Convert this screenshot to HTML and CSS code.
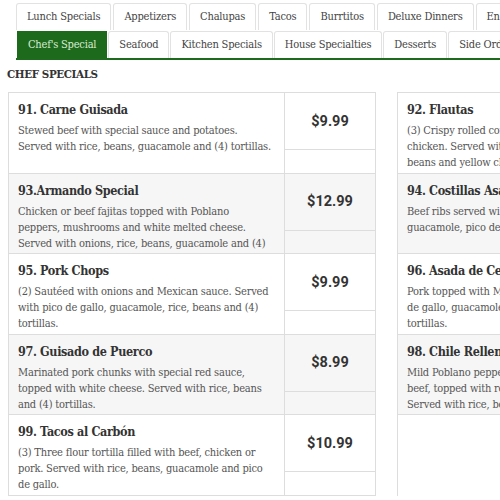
FILE: index.html
```html
<!DOCTYPE html>
<html lang="en">
<head>
<meta charset="utf-8">
<title>Chef Specials</title>
<link rel="stylesheet" href="styles.css">
</head>
<body>
<nav class="tabs">
  <ul class="tab-row">
    <li class="tab">Lunch Specials</li>
    <li class="tab">Appetizers</li>
    <li class="tab">Chalupas</li>
    <li class="tab">Tacos</li>
    <li class="tab">Burrtitos</li>
    <li class="tab">Deluxe Dinners</li>
    <li class="tab">Enchiladas</li>
  </ul>
  <ul class="tab-row tab-row-active">
    <li class="tab active">Chef's Special</li>
    <li class="tab">Seafood</li>
    <li class="tab">Kitchen Specials</li>
    <li class="tab">House Specialties</li>
    <li class="tab">Desserts</li>
    <li class="tab">Side Orders</li>
  </ul>
</nav>
<h2 class="section-title">CHEF SPECIALS</h2>
<div class="columns">
  <div class="menu">
    <div class="item">
      <div class="info"><h3 class="name">91. Carne Guisada</h3><p class="desc">Stewed beef with special sauce and potatoes. Served with rice, beans, guacamole and (4) tortillas.</p></div>
      <div class="price"><div class="amt">$9.99</div><div class="blank"></div></div>
    </div>
    <div class="item">
      <div class="info"><h3 class="name">93.Armando Special</h3><p class="desc">Chicken or beef fajitas topped with Poblano peppers, mushrooms and white melted cheese. Served with onions, rice, beans, guacamole and (4) tortillas.</p></div>
      <div class="price"><div class="amt">$12.99</div><div class="blank"></div></div>
    </div>
    <div class="item">
      <div class="info"><h3 class="name">95. Pork Chops</h3><p class="desc">(2) Sautéed with onions and Mexican sauce. Served with pico de gallo, guacamole, rice, beans and (4) tortillas.</p></div>
      <div class="price"><div class="amt">$9.99</div><div class="blank"></div></div>
    </div>
    <div class="item">
      <div class="info"><h3 class="name">97. Guisado de Puerco</h3><p class="desc">Marinated pork chunks with special red sauce, topped with white cheese. Served with rice, beans and (4) tortillas.</p></div>
      <div class="price"><div class="amt">$8.99</div><div class="blank"></div></div>
    </div>
    <div class="item">
      <div class="info"><h3 class="name">99. Tacos al Carbón</h3><p class="desc">(3) Three flour tortilla filled with beef, chicken or pork. Served with rice, beans, guacamole and pico de gallo.</p></div>
      <div class="price"><div class="amt">$10.99</div><div class="blank"></div></div>
    </div>
  </div>
  <div class="menu">
    <div class="item">
      <div class="info"><h3 class="name">92. Flautas</h3><p class="desc">(3) Crispy rolled corn tortillas filled with beef or chicken. Served with rice, guacamole, sour cream, beans and yellow cheese.</p></div>
      <div class="price"><div class="amt">$9.99</div><div class="blank"></div></div>
    </div>
    <div class="item">
      <div class="info"><h3 class="name">94. Costillas Asadas</h3><p class="desc">Beef ribs served with rice, refried beans, guacamole, pico de gallo and (4) tortillas.</p></div>
      <div class="price"><div class="amt">$11.99</div><div class="blank"></div></div>
    </div>
    <div class="item">
      <div class="info"><h3 class="name">96. Asada de Cerdo</h3><p class="desc">Pork topped with Mexican sauce. Served with pico de gallo, guacamole, rice, charro beans and (4) tortillas.</p></div>
      <div class="price"><div class="amt">$9.99</div><div class="blank"></div></div>
    </div>
    <div class="item">
      <div class="info"><h3 class="name">98. Chile Relleno</h3><p class="desc">Mild Poblano pepper stuffed with cheese or ground beef, topped with red Spanish sauce and cheese. Served with rice, beans and (4) tortillas.</p></div>
      <div class="price"><div class="amt">$9.99</div><div class="blank"></div></div>
    </div>
  </div>
</div>
</body>
</html>
```

FILE: styles.css
```css
html, body {
  margin: 0;
  padding: 0;
  background: #fff;
  overflow: hidden;
}
body {
  width: 500px;
  height: 500px;
  font-family: "DejaVu Serif", "Liberation Serif", serif;
  font-stretch: condensed;
  color: #555;
}
.tabs {
  padding: 3px 0 0 16px;
}
.tab-row {
  list-style: none;
  margin: 0;
  padding: 0;
  display: flex;
  gap: 2px;
  white-space: nowrap;
}
.tab-row-active {
  margin-top: 1px;
  padding-left: 1px;
  border-bottom: 2px solid #1e6b1e;
  gap: 1px;
}
.tab {
  flex: none;
  height: 27px;
  box-sizing: border-box;
  padding: 0 10px;
  border: 1px solid #e2e2e2;
  border-bottom: none;
  border-radius: 3px 3px 0 0;
  font-size: 11px;
  letter-spacing: -0.2px;
  line-height: 26px;
  color: #444;
  background: #fff;
}
.tab.active {
  background: #1d6a1d;
  border-color: #1d6a1d;
  color: #d9ecd2;
  border-radius: 0;
}
.section-title {
  margin: 6px 0 0 7px;
  font-size: 11.5px;
  letter-spacing: -0.4px;
  font-weight: bold;
  color: #333;
  line-height: 16px;
}
.columns {
  display: flex;
  gap: 21px;
  margin: 10px 0 0 8px;
}
.menu {
  flex: none;
  width: 366px;
  border: 1px solid #ddd;
  border-bottom: none;
}
.item {
  display: grid;
  grid-template-columns: 1fr 91px;
  height: 80.5px;
  box-sizing: border-box;
  border-bottom: 1px solid #ddd;
}
.item:nth-child(even) {
  background: #f6f6f6;
}
.info {
  padding: 8px 11px 0 9px;
  overflow: hidden;
}
.name {
  margin: 0;
  font-size: 12.5px;
  letter-spacing: -0.35px;
  font-weight: bold;
  line-height: 18px;
  color: #333;
}
.desc {
  margin: 4px 0 0 0;
  font-size: 11px;
  letter-spacing: -0.2px;
  line-height: 16px;
  color: #555;
}
.price {
  border-left: 1px solid #ddd;
  display: flex;
  flex-direction: column;
}
.amt {
  height: 56px;
  display: flex;
  align-items: center;
  justify-content: center;
  font-family: Roboto, "Liberation Sans", sans-serif;
  font-stretch: normal;
  font-weight: bold;
  font-size: 14.5px;
  color: #333;
  border-bottom: 1px solid #ddd;
}
.blank {
  flex: 1;
}
```
